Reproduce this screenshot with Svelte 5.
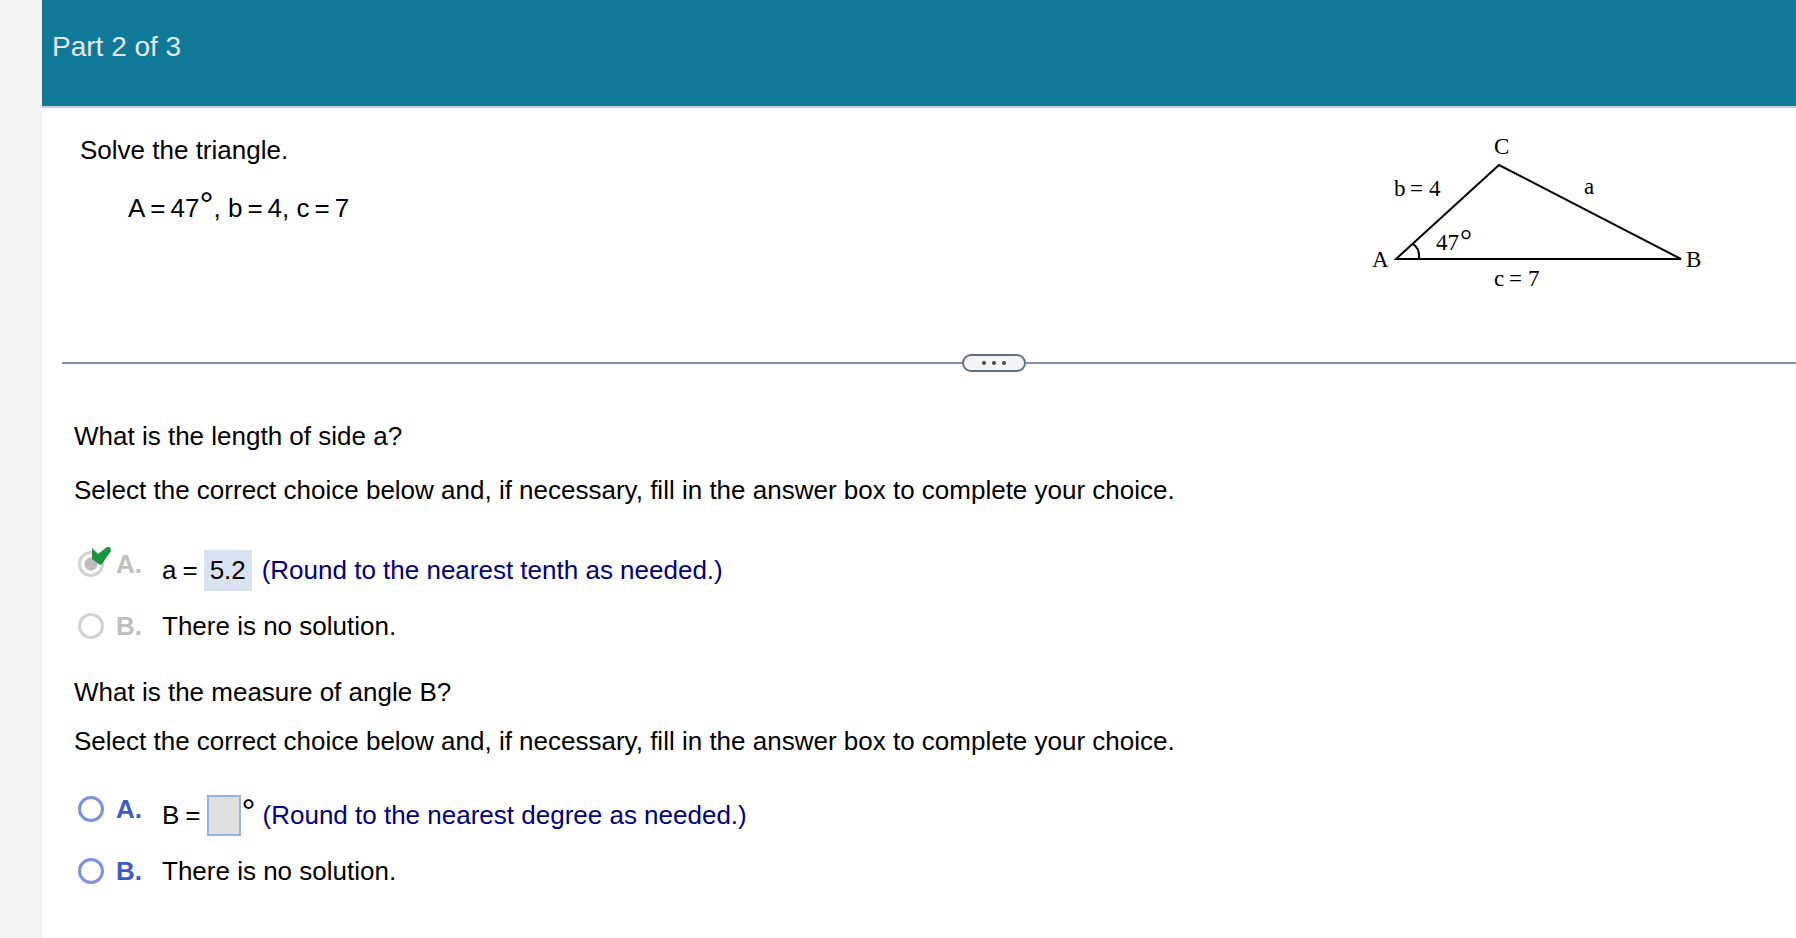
<script lang="ts">
  let part = 2
  let totalParts = 3
  let sideAnswer = '5.2'
  let angleAnswer = ''
  let sideChoice = 'A'
  let angleChoice = ''
</script>

<div class="page">
  <main>
    <header>
      <h1>Part {part} of {totalParts}</h1>
    </header>

    <section class="problem">
      <div class="statement">
        <p>Solve the triangle.</p>
        <p class="given">
          A<span class="eq">=</span>47<span class="degree">°</span>, b<span class="eq">=</span>4, c<span class="eq">=</span>7
        </p>
      </div>

      <svg class="figure" width="350" height="160" viewBox="0 0 350 160" role="img" aria-label="Triangle ABC">
        <path class="side" d="M30 124 L133 30 L315 124 Z" />
        <path class="arc" d="M47 109 Q54 114 53 123" />
        <text x="128" y="19">C</text>
        <text x="6" y="132">A</text>
        <text x="320" y="132">B</text>
        <text x="28" y="61">b</text>
        <text x="44" y="61">=</text>
        <text x="63" y="61">4</text>
        <text x="218" y="59">a</text>
        <text x="70" y="115">47</text>
        <text class="small-ring" x="94" y="115">°</text>
        <text x="128" y="151">c</text>
        <text x="143" y="151">=</text>
        <text x="162" y="151">7</text>
      </svg>
    </section>

    <div class="divider">
      <span class="line before"></span>
      <button class="handle" aria-label="Resize panels">
        <i></i><i></i><i></i>
      </button>
      <span class="line after"></span>
    </div>

    <section class="question first">
      <p>What is the length of side a?</p>
      <p class="instruction">
        Select the correct choice below and, if necessary, fill in the answer box to complete your choice.
      </p>

      <div class="choice">
        <label class="option done">
          <span class="mark">
            <input type="radio" name="side" value="A" bind:group={sideChoice} disabled />
            <svg class="check" width="20" height="20" viewBox="0 0 20 20" aria-hidden="true">
              <path d="M0 2 L6 8 L15 1 L18 1 L19 5 L10 18 L8 19 L0 13 Z" />
            </svg>
          </span>
          <b>A.</b>
        </label>
        <div class="content">
          <span>a<span class="eq">=</span></span>
          <input class="answer filled" type="text" aria-label="Length of side a" value={sideAnswer} readonly />
          <span class="hint">(Round to the nearest tenth as needed.)</span>
        </div>
      </div>

      <div class="choice">
        <label class="option done">
          <span class="mark">
            <input type="radio" name="side" value="B" bind:group={sideChoice} disabled />
          </span>
          <b>B.</b>
        </label>
        <div class="content">There is no solution.</div>
      </div>
    </section>

    <section class="question second">
      <p>What is the measure of angle B?</p>
      <p class="instruction">
        Select the correct choice below and, if necessary, fill in the answer box to complete your choice.
      </p>

      <div class="choice">
        <label class="option">
          <span class="mark">
            <input type="radio" name="angle" value="A" bind:group={angleChoice} />
          </span>
          <b>A.</b>
        </label>
        <div class="content">
          <span>B<span class="eq">=</span></span>
          <input class="answer empty" type="text" aria-label="Measure of angle B" bind:value={angleAnswer} />
          <span class="degree">°</span>
          <span class="hint">(Round to the nearest degree as needed.)</span>
        </div>
      </div>

      <div class="choice">
        <label class="option">
          <span class="mark">
            <input type="radio" name="angle" value="B" bind:group={angleChoice} />
          </span>
          <b>B.</b>
        </label>
        <div class="content">There is no solution.</div>
      </div>
    </section>
  </main>
</div>

<style>
  :global(body) {
    margin: 0;
  }

  .page {
    box-sizing: border-box;
    min-height: 100vh;
    padding-left: 42px;
    display: flex;
    background: #f3f3f3;
    color: #000;
    font-family: 'Liberation Sans', Arial, sans-serif;
    font-size: 26px;
    line-height: 30px;
  }

  main {
    flex: 1;
    background: #fff;
  }

  h1,
  p {
    margin: 0;
  }

  header {
    padding: 31px 10px 43px;
    background: #117998;
    border-bottom: 2px solid #c8cfdf;
  }

  h1 {
    color: #e1e8f5;
    font-size: 28px;
    font-weight: 400;
    line-height: 32px;
  }

  .problem {
    display: flex;
    justify-content: space-between;
    padding: 27px 80px 59px 38px;
  }

  .given {
    margin-top: 28px;
    padding-left: 48px;
  }

  .eq {
    margin: 0 6px;
  }

  .given .eq {
    margin: 0 5px;
  }

  .degree {
    font-size: 35px;
    line-height: 0;
  }

  .figure {
    display: block;
  }

  .figure text {
    font-family: 'Liberation Serif', 'Times New Roman', serif;
    font-size: 23px;
  }

  .figure .small-ring {
    font-size: 30px;
  }

  .side,
  .arc {
    fill: none;
    stroke: #000;
    stroke-width: 2;
  }

  .divider {
    display: flex;
    align-items: center;
    padding-left: 20px;
  }

  .line {
    height: 2px;
    background: #858da0;
  }

  .before {
    flex: 90;
  }

  .after {
    flex: 77;
  }

  .handle {
    box-sizing: border-box;
    display: flex;
    align-items: center;
    justify-content: center;
    gap: 6px;
    width: 64px;
    height: 18px;
    padding: 0;
    background: #f3f4f6;
    border: 2px solid #626f82;
    border-radius: 9px;
    cursor: pointer;
  }

  .handle i {
    width: 4px;
    height: 4px;
    border-radius: 50%;
    background: #4a4a4a;
  }

  .question {
    padding: 0 32px;
  }

  .first {
    margin-top: 49px;
  }

  .second {
    margin-top: 36px;
    padding-bottom: 48px;
  }

  .first .instruction {
    margin: 24px 0 44px;
  }

  .second .instruction {
    margin: 19px 0 38px;
  }

  .choice {
    display: flex;
    align-items: flex-start;
  }

  .choice + .choice {
    margin-top: 20px;
  }

  .option {
    display: flex;
    box-sizing: border-box;
    width: 88px;
    padding-left: 4px;
    gap: 12px;
    color: #3d5bc7;
  }

  .done {
    color: #bfbfbf;
  }

  .mark {
    position: relative;
    width: 26px;
    height: 26px;
    margin-top: 2px;
  }

  .mark input {
    display: block;
    box-sizing: border-box;
    appearance: none;
    width: 26px;
    height: 26px;
    margin: 0;
    border: 3px solid #7b92de;
    border-radius: 50%;
    background: #fff;
  }

  .done input {
    border-color: #d2d2d2;
  }

  .mark input:checked {
    background: radial-gradient(circle, #bdbdbd 6px, #fff 7px);
  }

  .check {
    position: absolute;
    left: 14px;
    top: -5px;
    fill: #1a9641;
  }

  .content {
    display: flex;
    align-items: baseline;
  }

  .answer {
    box-sizing: border-box;
    margin: 1px 0 0;
    border: 0;
    border-radius: 0;
    color: #000;
    font: inherit;
  }

  .filled {
    width: 48px;
    height: 41px;
    margin-right: 10px;
    padding: 5px 6px 6px;
    background: #dae1f1;
  }

  .empty {
    width: 34px;
    height: 41px;
    padding: 3px 2px 4px;
    background: #dfdfdf;
    border: 2px solid #98b2e3;
  }

  .content .degree {
    margin: 0 7px 0 1px;
  }

  .hint {
    color: #000080;
  }
</style>
